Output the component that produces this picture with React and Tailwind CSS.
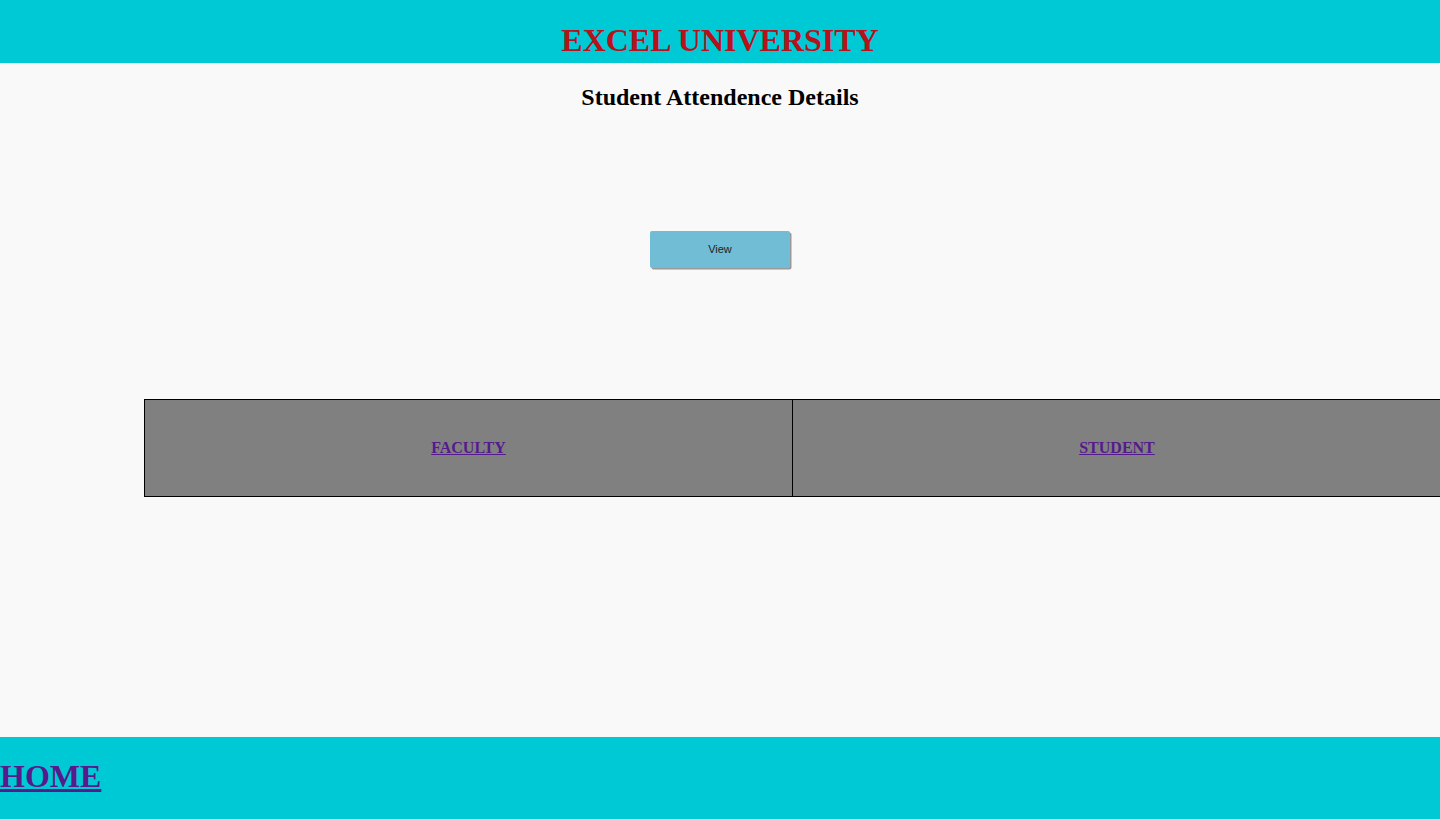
export default function App() {
  const serif = { fontFamily: '"Liberation Serif", "Times New Roman", serif' };
  return (
    <div className="w-[1440px] h-[819px] flex flex-col bg-[#f9f9f9] overflow-hidden" style={serif}>
      <header className="h-[63px] shrink-0 bg-[#00c9d6] pt-[22px] overflow-hidden">
        <h1 className="text-center text-[32px] leading-[36px] font-bold text-[#b5121b]">EXCEL UNIVERSITY</h1>
      </header>
      <main className="flex-1 flex flex-col">
        <h2 className="mt-[21px] text-center text-[24px] leading-[27px] font-bold text-black">Student Attendence Details</h2>
        <div className="mt-[120px] flex justify-center">
          <button
            className="w-[140px] h-[37px] bg-[#70bdd5] rounded-[2px] shadow-[1.5px_1.5px_0.5px_#9a9a9a] text-[11px] text-[#222]"
            style={{ fontFamily: '"Liberation Sans", Arial, sans-serif' }}
          >
            View
          </button>
        </div>
        <div className="mt-[131px] pl-[144px] overflow-hidden">
          <div className="w-[1298px] h-[98px] flex border border-black bg-[#808080]">
            <div className="w-[648px] flex items-center justify-center border-r border-black">
              <a href="#" className="text-[16px] font-bold underline text-[#551a8b]">FACULTY</a>
            </div>
            <div className="flex-1 flex items-center justify-center">
              <a href="#" className="text-[16px] font-bold underline text-[#551a8b]">STUDENT</a>
            </div>
          </div>
        </div>
      </main>
      <footer className="h-[82px] shrink-0 bg-[#00c9d6] pt-[21px]">
        <a href="#" className="block w-fit text-[32px] leading-[36px] font-bold underline text-[#551a8b]">HOME</a>
      </footer>
    </div>
  );
}
